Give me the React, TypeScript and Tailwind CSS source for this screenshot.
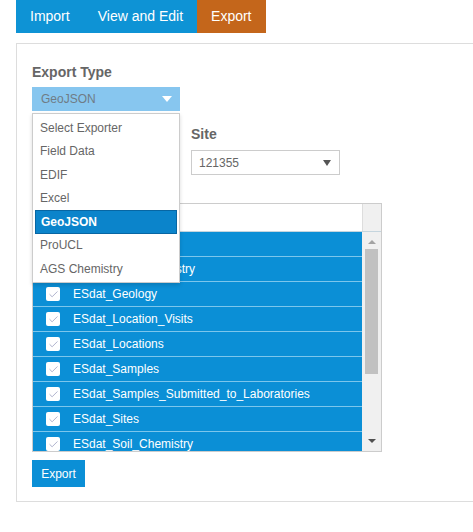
import { Check } from 'lucide-react';

const exporters = ['Select Exporter', 'Field Data', 'EDIF', 'Excel', 'GeoJSON', 'ProUCL', 'AGS Chemistry'];

const tables = [
    'ESdat_Chemistry',
    'ESdat_Gas_Chemistry',
    'ESdat_Geology',
    'ESdat_Location_Visits',
    'ESdat_Locations',
    'ESdat_Samples',
    'ESdat_Samples_Submitted_to_Laboratories',
    'ESdat_Sites',
    'ESdat_Soil_Chemistry',
];

export default function App() {
    return (
        <div className="w-full min-h-[532px] bg-white overflow-hidden font-['Liberation_Sans',Arial,sans-serif]">
            {/* Tabs */}
            <div className="flex ml-[16px] h-[33px] text-[14px] text-white">
                <div className="bg-[#0e93d5] px-[14px] flex items-center">Import</div>
                <div className="bg-[#0e93d5] px-[14px] flex items-center">View and Edit</div>
                <div className="bg-[#c4661b] px-[14px] flex items-center">Export</div>
            </div>

            {/* Panel */}
            <div className="ml-[16px] mt-[10px] w-[480px] border border-[#dddddd] pl-[15px] pt-[20px] pb-[14px]">
                <div className="text-[14px] leading-[16px] font-bold text-[#666666]">Export Type</div>
                <div className="relative mt-[7px] w-[148px]">
                    <div className="h-[24px] bg-[#87c6ef] flex items-center justify-between pl-[9px] pr-[8px]">
                        <span className="text-[12px] text-[#6f7c86]">GeoJSON</span>
                        <span className="w-0 h-0 border-l-[5px] border-r-[5px] border-t-[6px] border-l-transparent border-r-transparent border-t-white" />
                    </div>
                    {/* Open list */}
                    <div className="absolute left-0 top-[26px] z-10 w-[148px] h-[170px] bg-white border border-[#cccccc] shadow-[0_2px_4px_rgba(0,0,0,0.15)] py-[2px]">
                        {exporters.map((e) =>
                            e === 'GeoJSON' ? (
                                <div key={e} className="mx-[2px] h-[23.5px] flex items-center pl-[5px] bg-[#0b84cb] border border-[#0766a3] text-[12px] font-bold text-white">
                                    {e}
                                </div>
                            ) : (
                                <div key={e} className="h-[23.5px] flex items-center pl-[7px] text-[12px] text-[#666666]">
                                    {e}
                                </div>
                            )
                        )}
                    </div>
                </div>

                <div className="flex gap-[11px] mt-[15px]">
                    <div className="w-[148px]" />
                    <div>
                        <div className="text-[14px] leading-[16px] font-bold text-[#666666]">Site</div>
                        <div className="mt-[8px] w-[149px] h-[25px] border border-[#cccccc] flex items-center justify-between pl-[7px] pr-[8px]">
                            <span className="text-[12px] text-[#666666]">121355</span>
                            <span className="w-0 h-0 border-l-[4px] border-r-[4px] border-t-[6px] border-l-transparent border-r-transparent border-t-[#555555]" />
                        </div>
                    </div>
                </div>

                {/* Table list */}
                <div className="mt-[28px] w-[350px] h-[249px] border border-[#cccccc] flex flex-col">
                    <div className="flex h-[28px] border-b border-[#c5d5de]">
                        <div className="flex-1 bg-white" />
                        <div className="w-[19px] bg-[#f0f0f0] border-l border-[#dddddd]" />
                    </div>
                    <div className="flex flex-1 overflow-hidden">
                        <div className="flex-1 overflow-hidden bg-[#0b8fd6]">
                            {tables.map((t) => (
                                <div key={t} className="h-[25px] border-b border-[#7cc6ec] flex items-center pl-[13px] gap-[13px] bg-[#0b8fd6]">
                                    <span className="w-[14px] h-[14px] bg-white rounded-[2px] flex items-center justify-center shrink-0">
                                        <Check size={11} strokeWidth={1.5} className="text-[#8b8fb5]" />
                                    </span>
                                    <span className="text-[12px] text-white whitespace-nowrap">{t}</span>
                                </div>
                            ))}
                        </div>
                        <div className="w-[19px] bg-[#f0f0f0] flex flex-col items-center">
                            <span className="mt-[8px] w-0 h-0 border-l-[4px] border-r-[4px] border-b-[4px] border-l-transparent border-r-transparent border-b-[#a3a3a3]" />
                            <span className="mt-[5px] w-[13px] h-[125px] bg-[#c1c1c1]" />
                            <span className="mt-auto mb-[8px] w-0 h-0 border-l-[4px] border-r-[4px] border-t-[4px] border-l-transparent border-r-transparent border-t-[#505050]" />
                        </div>
                    </div>
                </div>

                <button className="mt-[8px] h-[27px] w-[53px] bg-[#0b8fd6] text-white text-[12px] flex items-center justify-center">
                    Export
                </button>
            </div>
        </div>
    );
}
